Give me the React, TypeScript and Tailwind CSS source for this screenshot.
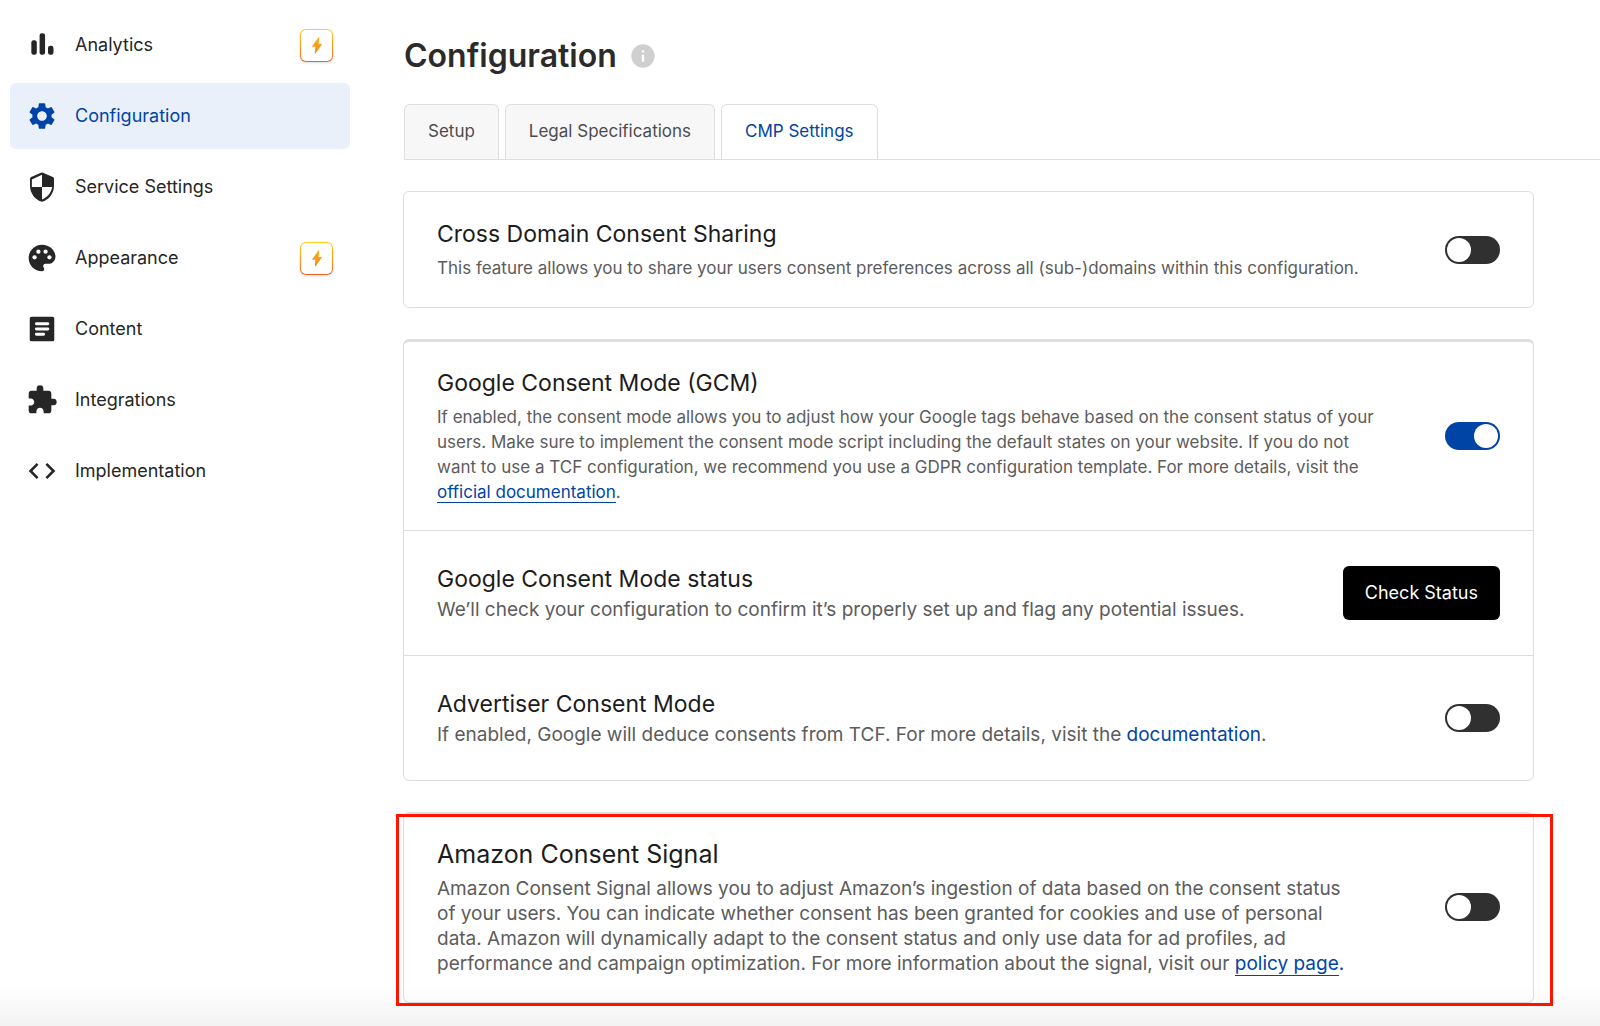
import { useState } from "react";
import type { ReactNode } from "react";
import { MdCode, MdExtension, MdInfo, MdSettings } from "react-icons/md";

/* ================= TYPES ================= */

interface NavItem {
  label: string;
  icon: ReactNode;
  premium?: boolean;
}

interface SettingRowProps {
  id: string;
  title: string;
  titleClass?: string;
  textClass: string;
  spacing: string;
  control: ReactNode;
  children: ReactNode;
}

/* ================= ICONS ================= */

function BarsIcon() {
  return (
    <svg viewBox="0 0 24 24" className="size-8" fill="currentColor">
      <rect x="4" y="8.4" width="4.1" height="11" rx="1.7" />
      <rect x="10.2" y="3.2" width="4.1" height="16.2" rx="1.7" />
      <rect x="16.5" y="12.6" width="4.1" height="6.8" rx="1.7" />
    </svg>
  );
}

function ShieldIcon() {
  return (
    <svg viewBox="0 0 24 24" className="size-8" fill="currentColor">
      <path
        fillRule="evenodd"
        d="M11.2 1.3 3.9 4.5A1.5 1.5 0 0 0 3 5.9V11c0 5.55 3.84 10.74 9 12 5.16-1.26 9-6.45 9-12V5.9a1.5 1.5 0 0 0-.9-1.4l-7.3-3.2a2 2 0 0 0-1.6 0ZM12 12h7.6c-.53 4.12-3.88 8.1-7.6 9.3V12H4.4V6.3l7.6-3.4V12Z"
      />
    </svg>
  );
}

function PaletteIcon() {
  return (
    <svg viewBox="0 0 24 24" className="size-8">
      <path
        fill="currentColor"
        d="M12 2C6.5 2 2 6.5 2 12s4.5 10 10 10c.9 0 1.7-.7 1.7-1.7 0-.4-.2-.8-.4-1.1-.3-.3-.4-.7-.4-1.1 0-.9.7-1.7 1.7-1.7h2c3 0 5.5-2.5 5.5-5.6C22 6 17.5 2 12 2Z"
      />
      <g fill="#fff">
        <circle cx="6.4" cy="11.5" r="1.6" />
        <circle cx="9.3" cy="7.3" r="1.6" />
        <circle cx="14.7" cy="7.3" r="1.6" />
        <circle cx="17.6" cy="11.5" r="1.6" />
      </g>
    </svg>
  );
}

function ArticleIcon() {
  return (
    <svg viewBox="0 0 24 24" className="size-8">
      <rect x="2.8" y="2.8" width="18.4" height="18.4" rx="1.4" fill="currentColor" />
      <path
        d="M7.8 8h8.6M7.8 12h8.6M7.8 16h5.4"
        stroke="#fff"
        strokeWidth="2.2"
        strokeLinecap="round"
      />
    </svg>
  );
}

function PremiumBadge() {
  return (
    <span className="rounded-md bg-linear-to-b from-[#fdd017] to-[#f4601f] p-px shadow-sm">
      <span className="flex size-[31px] items-center justify-center rounded-[5px] bg-white">
        <svg viewBox="0 0 10 17" className="h-[17px] w-[10px]">
          <defs>
            <linearGradient id="bolt" x1="0" y1="0" x2="0" y2="1">
              <stop offset="0" stopColor="#fdb110" />
              <stop offset="1" stopColor="#f8821e" />
            </linearGradient>
          </defs>
          <path
            fill="url(#bolt)"
            d="M6.4.5.2 9.2c-.2.3 0 .6.3.6h3L2.8 16c0 .5.5.6.8.2l6.2-8.6c.2-.3 0-.6-.4-.6H6.5l.8-6.2c0-.5-.6-.6-.9-.3Z"
          />
        </svg>
      </span>
    </span>
  );
}

/* ================= DATA ================= */

const NAV_ITEMS: NavItem[] = [
  { label: "Analytics", icon: <BarsIcon />, premium: true },
  { label: "Configuration", icon: <MdSettings size={32} /> },
  { label: "Service Settings", icon: <ShieldIcon /> },
  { label: "Appearance", icon: <PaletteIcon />, premium: true },
  { label: "Content", icon: <ArticleIcon /> },
  { label: "Integrations", icon: <MdExtension size={32} /> },
  { label: "Implementation", icon: <MdCode size={32} /> },
];

const TABS = ["Setup", "Legal Specifications", "CMP Settings"];

/* ================= PARTS ================= */

function Toggle({ id, defaultChecked }: { id: string; defaultChecked?: boolean }) {
  return (
    <input
      id={id}
      type="checkbox"
      role="switch"
      defaultChecked={defaultChecked}
      className="flex h-7 w-[55px] shrink-0 cursor-pointer appearance-none items-center rounded-full bg-[#303030] px-[2px] before:size-6 before:rounded-full before:bg-white checked:justify-end checked:bg-[#0045a5]"
    />
  );
}

function SettingRow({
  id,
  title,
  titleClass = "text-[23px]",
  textClass,
  spacing,
  control,
  children,
}: SettingRowProps) {
  return (
    <div className={`flex items-center justify-between gap-8 px-[33px] ${spacing}`}>
      <div>
        <h2 className={`leading-8 ${titleClass}`}>
          <label htmlFor={id}>{title}</label>
        </h2>
        <p className={`leading-[25px] text-[#5c5c5c] ${textClass}`}>{children}</p>
      </div>
      {control}
    </div>
  );
}

/* ================= PAGE ================= */

export default function App() {
  const [activeItem, setActiveItem] = useState("Configuration");
  const [activeTab, setActiveTab] = useState("CMP Settings");

  return (
    <div className="relative flex min-h-screen bg-white font-[Inter,sans-serif] text-[#1c1c1c]">
      <nav className="flex w-[350px] shrink-0 flex-col gap-[5px] pt-3 pl-[10px]">
        {NAV_ITEMS.map((item) => (
          <button
            key={item.label}
            type="button"
            onClick={() => setActiveItem(item.label)}
            className={`flex h-[66px] items-center gap-[17px] rounded-md pr-[17px] pl-4 text-left text-lg ${
              item.label === activeItem ? "bg-[#eaf0f9] text-[#0045a5]" : "text-[#262626]"
            }`}
          >
            {item.icon}
            <span className="flex-1">{item.label}</span>
            {item.premium && <PremiumBadge />}
          </button>
        ))}
      </nav>

      <main className="min-w-0 flex-1 pt-9 pl-[53px]">
        <div className="flex items-center gap-3 pl-px">
          <h1 className="text-[32px] leading-10 font-semibold text-[#2b2b2b]">Configuration</h1>
          <MdInfo size={28} className="text-[#cfcfcf]" />
        </div>

        <div role="tablist" className="mt-7 ml-px flex gap-[6px] border-b border-[#dedede]">
          {TABS.map((tab) => (
            <button
              key={tab}
              type="button"
              role="tab"
              aria-selected={tab === activeTab}
              onClick={() => setActiveTab(tab)}
              className={`h-[55px] rounded-t-md border border-b-0 border-[#dedede] px-[23px] text-[17px] ${
                tab === activeTab ? "bg-white text-[#0045a5]" : "bg-[#f7f7f7] text-[#4d4d4d]"
              }`}
            >
              {tab}
            </button>
          ))}
        </div>

        <div className="mt-[31px] mr-[66px] flex flex-col gap-[31px]">
          <section className="rounded-md border border-[#dedede]">
            <SettingRow
              id="cross-domain"
              title="Cross Domain Consent Sharing"
              textClass="mt-[6px] text-[17px]"
              spacing="py-[26px]"
              control={<Toggle id="cross-domain" />}
            >
              This feature allows you to share your users consent preferences across all
              (sub-)domains within this configuration.
            </SettingRow>
          </section>

          <section className="divide-y divide-[#dedede] rounded-md border border-t-3 border-[#dedede]">
            <SettingRow
              id="gcm"
              title="Google Consent Mode (GCM)"
              textClass="mt-[6px] text-[17px]"
              spacing="pt-[25px] pb-[25px]"
              control={<Toggle id="gcm" defaultChecked />}
            >
              If enabled, the consent mode allows you to adjust how your Google tags behave based on
              the consent status of your
              <br />
              users. Make sure to implement the consent mode script including the default states on
              your website. If you do not
              <br />
              want to use a TCF configuration, we recommend you use a GDPR configuration template.
              For more details, visit the
              <br />
              <a href="#docs" className="border-b border-current text-[#0045a5]">
                official documentation
              </a>
              .
            </SettingRow>
            <SettingRow
              id="gcm-status"
              title="Google Consent Mode status"
              textClass="mt-[2px] text-[19px]"
              spacing="pt-8 pb-[33px]"
              control={
                <button
                  id="gcm-status"
                  type="button"
                  className="h-[54px] shrink-0 rounded-md bg-black px-[22px] text-lg text-white"
                >
                  Check Status
                </button>
              }
            >
              We’ll check your configuration to confirm it’s properly set up and flag any potential
              issues.
            </SettingRow>
            <SettingRow
              id="advertiser"
              title="Advertiser Consent Mode"
              textClass="mt-[2px] text-[19px]"
              spacing="pt-8 pb-[33px]"
              control={<Toggle id="advertiser" />}
            >
              If enabled, Google will deduce consents from TCF. For more details, visit the{" "}
              <a href="#documentation" className="text-[#0045a5]">
                documentation
              </a>
              .
            </SettingRow>
          </section>

          <section className="relative rounded-md border border-t-3 border-[#dedede]">
            <SettingRow
              id="amazon"
              title="Amazon Consent Signal"
              titleClass="text-[25px]"
              textClass="mt-[6px] text-[19px]"
              spacing="pt-[23px] pb-[26px]"
              control={<Toggle id="amazon" />}
            >
              Amazon Consent Signal allows you to adjust Amazon’s ingestion of data based on the
              consent status
              <br />
              of your users. You can indicate whether consent has been granted for cookies and use
              of personal
              <br />
              data. Amazon will dynamically adapt to the consent status and only use data for ad
              profiles, ad
              <br />
              performance and campaign optimization. For more information about the signal, visit
              our{" "}
              <a href="#policy" className="border-b border-current text-[#0045a5]">
                policy page
              </a>
              <span className="text-[#0045a5]">.</span>
            </SettingRow>
            <div className="pointer-events-none absolute -top-px -right-5 -bottom-1 -left-2 border-3 border-[#ff1500]" />
          </section>
        </div>
      </main>

      <div className="pointer-events-none absolute inset-x-0 bottom-0 h-10 bg-linear-to-t from-black/5 to-transparent" />
    </div>
  );
}
